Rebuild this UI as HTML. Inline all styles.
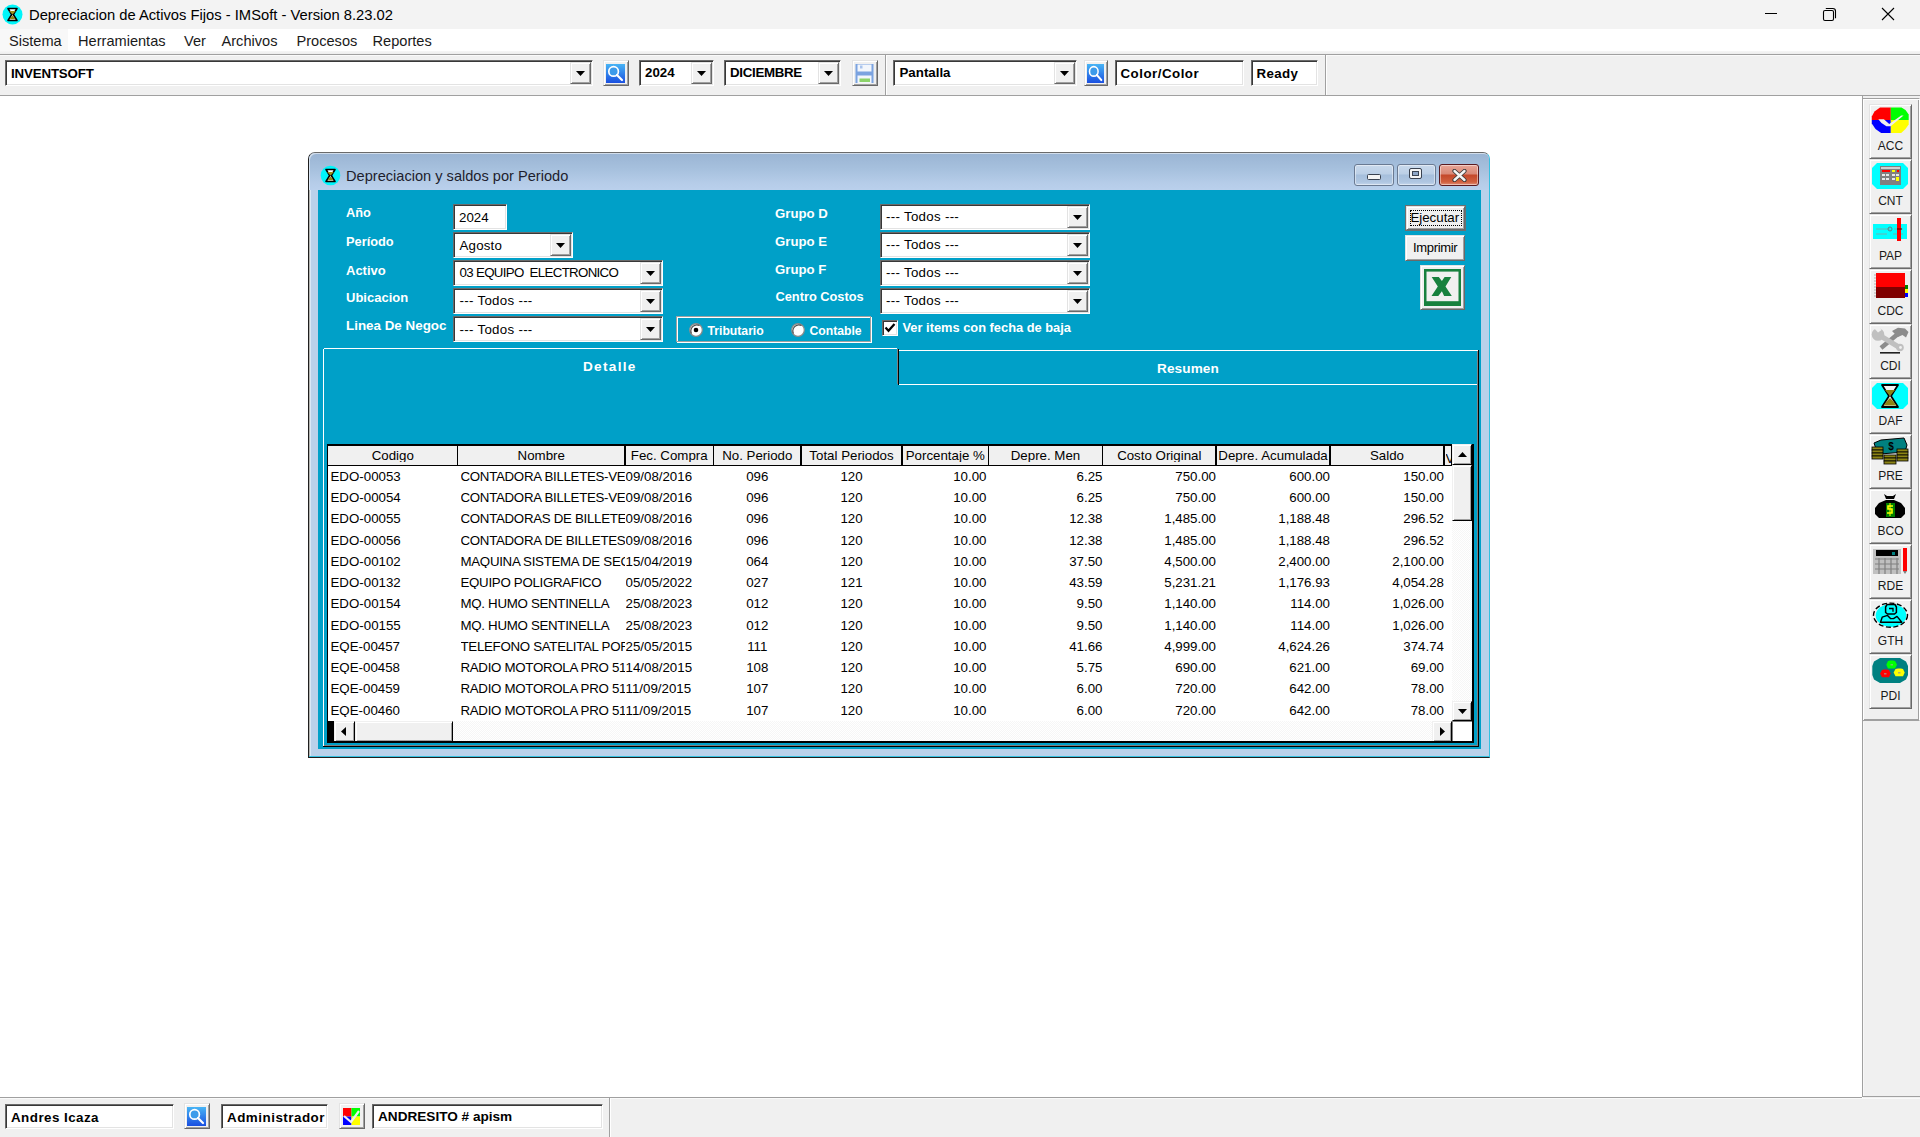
<!DOCTYPE html><html><head><meta charset="utf-8"><style>
html,body{margin:0;padding:0;}
body{width:1920px;height:1137px;overflow:hidden;position:relative;background:#fff;font-family:"Liberation Sans",sans-serif;}
.a{position:absolute;}
.t{white-space:nowrap;}
</style></head><body>
<div class="a " style="left:0px;top:0px;width:1920px;height:29px;background:#F3F3F3;"></div>
<svg class="a" style="left:2px;top:4px" width="21" height="21" viewBox="0 0 21 21"><circle cx="10.5" cy="10.5" r="10" fill="#00F5FA"/><path d="M6 4.5H15L11.3 10.5L15 16.5H6L9.7 10.5Z" fill="#fff" stroke="#000" stroke-width="1.6" stroke-linejoin="round"/><path d="M7.2 7H13.8L10.5 10.5Z" fill="#9C8F1C"/><path d="M7.4 15.3H13.6L10.5 11.6Z" fill="#8F8414"/></svg>
<div class="a t " style="left:29px;top:7.51px;font-size:14.75px;line-height:14.75px;font-weight:normal;color:#000;">Depreciacion de Activos Fijos - IMSoft - Version 8.23.02</div>
<div class="a " style="left:1765px;top:13px;width:12px;height:1px;background:#000;"></div>
<svg class="a" style="left:1822px;top:7px" width="15" height="15" viewBox="0 0 15 15"><rect x="1.5" y="3.5" width="10" height="10" rx="1.5" fill="none" stroke="#000" stroke-width="1.1"/><path d="M3.8 1.5H10.8Q13.5 1.5 13.5 4.2V11.2" fill="none" stroke="#000" stroke-width="1.1"/></svg>
<svg class="a" style="left:1881px;top:7px" width="14" height="14" viewBox="0 0 14 14"><path d="M1 1L13 13M13 1L1 13" stroke="#000" stroke-width="1.1"/></svg>
<div class="a " style="left:0px;top:29px;width:1920px;height:22px;background:#fff;"></div>
<div class="a " style="left:0px;top:29px;width:68px;height:22px;background:#F8F8F8;"></div>
<div class="a " style="left:0px;top:51px;width:1920px;height:3px;background:linear-gradient(#F6F6F6,#EDEDED);"></div>
<div class="a t " style="left:9px;top:34.04px;font-size:14.6px;line-height:14.6px;font-weight:normal;color:#1A1A1A;">Sistema</div>
<div class="a t " style="left:78px;top:34.04px;font-size:14.6px;line-height:14.6px;font-weight:normal;color:#1A1A1A;">Herramientas</div>
<div class="a t " style="left:184px;top:34.04px;font-size:14.6px;line-height:14.6px;font-weight:normal;color:#1A1A1A;">Ver</div>
<div class="a t " style="left:221.5px;top:34.04px;font-size:14.6px;line-height:14.6px;font-weight:normal;color:#1A1A1A;">Archivos</div>
<div class="a t " style="left:296.5px;top:34.04px;font-size:14.6px;line-height:14.6px;font-weight:normal;color:#1A1A1A;">Procesos</div>
<div class="a t " style="left:372.5px;top:34.04px;font-size:14.6px;line-height:14.6px;font-weight:normal;color:#1A1A1A;">Reportes</div>
<div class="a " style="left:0px;top:54px;width:1920px;height:1px;background:#A0A0A0;"></div>
<div class="a " style="left:0px;top:55px;width:1920px;height:40px;background:#F0F0F0;"></div>
<div class="a " style="left:0px;top:55px;width:1920px;height:1px;background:#FAFAFA;"></div>
<div class="a " style="left:0px;top:95px;width:1920px;height:1px;background:#A0A0A0;"></div>
<div class="a " style="left:885px;top:55px;width:1px;height:40px;background:#A0A0A0;"></div>
<div class="a " style="left:886px;top:55px;width:1px;height:40px;background:#fff;"></div>
<div class="a " style="left:1325px;top:55px;width:1px;height:40px;background:#A0A0A0;"></div>
<div class="a " style="left:1326px;top:55px;width:1px;height:40px;background:#fff;"></div>
<div class="a " style="left:5px;top:60px;width:588px;height:26px;background:#fff;box-sizing:border-box;border:1px solid;border-color:#6A6A6A #fff #fff #6A6A6A;box-shadow:inset 1px 1px 0 #383838,inset -1px -1px 0 #E3E3E3;"></div><div class="a " style="left:570px;top:62px;width:21px;height:22px;background:#F0F0F0;box-sizing:border-box;border:1px solid;border-color:#E3E3E3 #696969 #696969 #E3E3E3;box-shadow:inset 1px 1px 0 #fff,inset -1px -1px 0 #A0A0A0;"></div><svg class="a" style="left:576.0px;top:71.0px" width="9" height="5"><path d="M0 0H9L4.5 5Z" fill="#000"/></svg><div class="a t " style="left:11px;top:66.74px;font-size:13.3px;line-height:13.3px;font-weight:bold;color:#000;letter-spacing:-0.15px;">INVENTSOFT</div>
<div class="a " style="left:603px;top:60px;width:26px;height:26px;background:#F0F0F0;box-sizing:border-box;border:1px solid;border-color:#E3E3E3 #696969 #696969 #E3E3E3;box-shadow:inset 1px 1px 0 #fff,inset -1px -1px 0 #A0A0A0;"></div><svg class="a" style="left:606px;top:64px" width="19" height="19" viewBox="0 0 19 19" preserveAspectRatio="none"><defs><linearGradient id="sg" x1="0" y1="0" x2="0" y2="1"><stop offset="0" stop-color="#47B4F5"/><stop offset="1" stop-color="#1A4FE0"/></linearGradient></defs><rect x="0" y="0" width="19" height="19" fill="url(#sg)"/><circle cx="7.6" cy="7.4" r="4.8" fill="#3D9BEA" stroke="#fff" stroke-width="1.7"/><path d="M11 11L16 16" stroke="#fff" stroke-width="2.2" stroke-linecap="round"/></svg>
<div class="a " style="left:639px;top:60px;width:75px;height:26px;background:#fff;box-sizing:border-box;border:1px solid;border-color:#6A6A6A #fff #fff #6A6A6A;box-shadow:inset 1px 1px 0 #383838,inset -1px -1px 0 #E3E3E3;"></div><div class="a " style="left:691px;top:62px;width:21px;height:22px;background:#F0F0F0;box-sizing:border-box;border:1px solid;border-color:#E3E3E3 #696969 #696969 #E3E3E3;box-shadow:inset 1px 1px 0 #fff,inset -1px -1px 0 #A0A0A0;"></div><svg class="a" style="left:697.0px;top:71.0px" width="9" height="5"><path d="M0 0H9L4.5 5Z" fill="#000"/></svg><div class="a t " style="left:645px;top:66.44px;font-size:13.3px;line-height:13.3px;font-weight:bold;color:#000;">2024</div>
<div class="a " style="left:724px;top:60px;width:117px;height:26px;background:#fff;box-sizing:border-box;border:1px solid;border-color:#6A6A6A #fff #fff #6A6A6A;box-shadow:inset 1px 1px 0 #383838,inset -1px -1px 0 #E3E3E3;"></div><div class="a " style="left:818px;top:62px;width:21px;height:22px;background:#F0F0F0;box-sizing:border-box;border:1px solid;border-color:#E3E3E3 #696969 #696969 #E3E3E3;box-shadow:inset 1px 1px 0 #fff,inset -1px -1px 0 #A0A0A0;"></div><svg class="a" style="left:824.0px;top:71.0px" width="9" height="5"><path d="M0 0H9L4.5 5Z" fill="#000"/></svg><div class="a t " style="left:730px;top:66.44px;font-size:13.3px;line-height:13.3px;font-weight:bold;color:#000;letter-spacing:-0.3px;">DICIEMBRE</div>
<div class="a " style="left:852px;top:60px;width:26px;height:26px;background:#F0F0F0;box-sizing:border-box;border:1px solid;border-color:#E3E3E3 #696969 #696969 #E3E3E3;box-shadow:inset 1px 1px 0 #fff,inset -1px -1px 0 #A0A0A0;"></div>
<svg class="a" style="left:855px;top:64px" width="19" height="19" viewBox="0 0 19 19"><rect x="0.5" y="0" width="18" height="19" fill="#7BA3E0"/><rect x="2.5" y="0.5" width="14" height="7" fill="#F2F6FC"/><rect x="5" y="1.5" width="2.5" height="3" fill="#A9C3EC"/><rect x="2.5" y="11.5" width="14" height="7.5" fill="#F2F6FC"/><rect x="4.5" y="14.5" width="10.5" height="3.5" fill="#8CD36A"/></svg>
<div class="a " style="left:893px;top:60px;width:184px;height:26px;background:#fff;box-sizing:border-box;border:1px solid;border-color:#6A6A6A #fff #fff #6A6A6A;box-shadow:inset 1px 1px 0 #383838,inset -1px -1px 0 #E3E3E3;"></div><div class="a " style="left:1054px;top:62px;width:21px;height:22px;background:#F0F0F0;box-sizing:border-box;border:1px solid;border-color:#E3E3E3 #696969 #696969 #E3E3E3;box-shadow:inset 1px 1px 0 #fff,inset -1px -1px 0 #A0A0A0;"></div><svg class="a" style="left:1060.0px;top:71.0px" width="9" height="5"><path d="M0 0H9L4.5 5Z" fill="#000"/></svg><div class="a t " style="left:899.5px;top:66.44px;font-size:13.3px;line-height:13.3px;font-weight:bold;color:#000;">Pantalla</div>
<div class="a " style="left:1084px;top:60px;width:24px;height:26px;background:#F0F0F0;box-sizing:border-box;border:1px solid;border-color:#E3E3E3 #696969 #696969 #E3E3E3;box-shadow:inset 1px 1px 0 #fff,inset -1px -1px 0 #A0A0A0;"></div><svg class="a" style="left:1087px;top:64px" width="17" height="19" viewBox="0 0 19 19" preserveAspectRatio="none"><defs><linearGradient id="sg" x1="0" y1="0" x2="0" y2="1"><stop offset="0" stop-color="#47B4F5"/><stop offset="1" stop-color="#1A4FE0"/></linearGradient></defs><rect x="0" y="0" width="19" height="19" fill="url(#sg)"/><circle cx="7.6" cy="7.4" r="4.8" fill="#3D9BEA" stroke="#fff" stroke-width="1.7"/><path d="M11 11L16 16" stroke="#fff" stroke-width="2.2" stroke-linecap="round"/></svg>
<div class="a " style="left:1115px;top:60px;width:129px;height:26px;background:#fff;box-sizing:border-box;border:1px solid;border-color:#6A6A6A #fff #fff #6A6A6A;box-shadow:inset 1px 1px 0 #383838,inset -1px -1px 0 #E3E3E3;"></div>
<div class="a t " style="left:1120.5px;top:67.04px;font-size:13.3px;line-height:13.3px;font-weight:bold;color:#000;letter-spacing:0.5px;">Color/Color</div>
<div class="a " style="left:1251px;top:60px;width:67px;height:26px;background:#fff;box-sizing:border-box;border:1px solid;border-color:#6A6A6A #fff #fff #6A6A6A;box-shadow:inset 1px 1px 0 #383838,inset -1px -1px 0 #E3E3E3;"></div>
<div class="a t " style="left:1256.5px;top:67.04px;font-size:13.3px;line-height:13.3px;font-weight:bold;color:#000;letter-spacing:0.4px;">Ready</div>
<div class="a " style="left:1862px;top:96px;width:1px;height:1001px;background:#A0A0A0;"></div>
<div class="a " style="left:0px;top:1097px;width:1862px;height:1px;background:#A0A0A0;"></div>
<div class="a " style="left:1863px;top:96px;width:57px;height:1041px;background:#F0F0F0;"></div>
<div class="a " style="left:1862px;top:98px;width:58px;height:623px;box-sizing:border-box;border:1px solid;border-color:#A0A0A0 #fff #A0A0A0 #A0A0A0;box-shadow:inset 1px 1px 0 #fff,inset -1px -1px 0 #A0A0A0;background:#F0F0F0;"></div>
<div class="a " style="left:1862px;top:722px;width:58px;height:375px;box-sizing:border-box;border-left:1px solid #A0A0A0;border-bottom:1px solid #A0A0A0;box-shadow:inset 1px 0 0 #F8F8F8;background:#F0F0F0;"></div>
<div class="a " style="left:1869px;top:104px;width:43px;height:55px;background:#F0F0F0;box-sizing:border-box;border:1px solid;border-color:#E3E3E3 #696969 #696969 #E3E3E3;box-shadow:inset 1px 1px 0 #fff,inset -1px -1px 0 #A0A0A0;"></div>
<div class="a" style="left:1871px;top:107px;width:38px;height:28px"><svg width="38" height="28" viewBox="0 0 38 28"><clipPath id="accb"><path d="M9 0.6H30.5L34.5 3L37.7 7.5V17.6L34.5 22L30.2 25.9H10.1L4.5 22L0.8 16.5V9.5L3.5 4.5Z"/></clipPath><g clip-path="url(#accb)"><rect x="0" y="0" width="19.8" height="13" fill="#FF0000"/><rect x="19.8" y="0" width="19" height="13" fill="#00FF00"/><rect x="0" y="13" width="19.8" height="14" fill="#0000FF"/><rect x="19.8" y="13" width="19" height="14" fill="#FFFF00"/></g><path d="M7.3 12.2H12.9L18.2 16.9L30.2 8.5H32.6L19.6 19.2H15.4L10.5 15.9Z" fill="#EEEEEE"/></svg></div>
<div class="a t" style="left:1690.5px;width:400px;text-align:center;top:139.84px;font-size:12px;line-height:12px;font-weight:normal;color:#1A1A1A;">ACC</div>
<div class="a " style="left:1869px;top:159px;width:43px;height:55px;background:#F0F0F0;box-sizing:border-box;border:1px solid;border-color:#E3E3E3 #696969 #696969 #E3E3E3;box-shadow:inset 1px 1px 0 #fff,inset -1px -1px 0 #A0A0A0;"></div>
<div class="a" style="left:1871px;top:162px;width:38px;height:28px"><svg width="38" height="28" viewBox="0 0 38 28"><path d="M6 1H32L37 6V22L32 27H6L1 22V6Z" fill="#00FFFF"/><rect x="9" y="4" width="21" height="19" fill="#808080"/><rect x="10" y="5" width="19" height="2" fill="#D0D0D0"/><rect x="11" y="8" width="8" height="2" fill="#FF0000"/><rect x="21" y="8" width="3" height="2" fill="#FFFF00"/><rect x="26" y="8" width="2" height="2" fill="#FF0000"/><rect x="11" y="12" width="3" height="2" fill="#E8E8E8"/><rect x="15" y="12" width="3" height="2" fill="#E8E8E8"/><rect x="21" y="12" width="3" height="2" fill="#E8E8E8"/><rect x="25" y="12" width="3" height="2" fill="#E8E8E8"/><rect x="11" y="16" width="3" height="2" fill="#E8E8E8"/><rect x="15" y="16" width="3" height="2" fill="#E8E8E8"/><rect x="21" y="16" width="3" height="2" fill="#E8E8E8"/><rect x="25" y="15" width="3" height="4" fill="#FFFF00"/></svg></div>
<div class="a t" style="left:1690.5px;width:400px;text-align:center;top:194.84px;font-size:12px;line-height:12px;font-weight:normal;color:#1A1A1A;">CNT</div>
<div class="a " style="left:1869px;top:214px;width:43px;height:55px;background:#F0F0F0;box-sizing:border-box;border:1px solid;border-color:#E3E3E3 #696969 #696969 #E3E3E3;box-shadow:inset 1px 1px 0 #fff,inset -1px -1px 0 #A0A0A0;"></div>
<div class="a" style="left:1871px;top:217px;width:38px;height:28px"><svg width="38" height="28" viewBox="0 0 38 28"><rect x="2" y="7" width="34" height="15" fill="#00FFFF"/><path d="M5 12H19M23 12H32M5 17H16M22 17H32" stroke="#70B0B0" stroke-width="1"/><circle cx="19" cy="12" r="2" fill="none" stroke="#608080" stroke-width="1"/><rect x="26" y="1" width="4" height="23" fill="#FF0000"/><path d="M26 12H31" stroke="#400000" stroke-width="1"/></svg></div>
<div class="a t" style="left:1690.5px;width:400px;text-align:center;top:249.84px;font-size:12px;line-height:12px;font-weight:normal;color:#1A1A1A;">PAP</div>
<div class="a " style="left:1869px;top:269px;width:43px;height:55px;background:#F0F0F0;box-sizing:border-box;border:1px solid;border-color:#E3E3E3 #696969 #696969 #E3E3E3;box-shadow:inset 1px 1px 0 #fff,inset -1px -1px 0 #A0A0A0;"></div>
<div class="a" style="left:1871px;top:272px;width:38px;height:28px"><svg width="38" height="28" viewBox="0 0 38 28"><rect x="5" y="1" width="29" height="14" fill="#FF0000"/><rect x="5" y="15" width="29" height="11" fill="#800000"/><rect x="34" y="13" width="3" height="4" fill="#008000"/><rect x="34" y="17" width="3" height="4" fill="#FFFF00"/><rect x="34" y="21" width="3" height="4" fill="#0000FF"/><path d="M3 3H5M3 6H5M3 9H5M3 12H5M3 15H5M3 18H5M3 21H5M3 24H5" stroke="#B0B0B0" stroke-width="1"/></svg></div>
<div class="a t" style="left:1690.5px;width:400px;text-align:center;top:304.84px;font-size:12px;line-height:12px;font-weight:normal;color:#1A1A1A;">CDC</div>
<div class="a " style="left:1869px;top:324px;width:43px;height:55px;background:#F0F0F0;box-sizing:border-box;border:1px solid;border-color:#E3E3E3 #696969 #696969 #E3E3E3;box-shadow:inset 1px 1px 0 #fff,inset -1px -1px 0 #A0A0A0;"></div>
<div class="a" style="left:1871px;top:327px;width:38px;height:28px"><svg width="38" height="28" viewBox="0 0 38 28"><path d="M28 6L10 21" stroke="#8C8C8C" stroke-width="4.5"/><path d="M21 4L27 0.8L34 1.5L37.5 5L35 10.5L31.5 8L27 10Z" fill="#8C8C8C"/><path d="M8 8L28.5 20.5" stroke="#C0C0C0" stroke-width="5"/><circle cx="7" cy="7.5" r="6.3" fill="#C0C0C0"/><path d="M3 1L7 5.5L10.5 3L8 0Z" fill="#F0F0F0"/><circle cx="29" cy="20.5" r="3.8" fill="#C0C0C0"/><circle cx="29.5" cy="20.5" r="1.4" fill="#F0F0F0"/><rect x="9" y="25" width="20" height="1.6" fill="#202020"/></svg></div>
<div class="a t" style="left:1690.5px;width:400px;text-align:center;top:359.84px;font-size:12px;line-height:12px;font-weight:normal;color:#1A1A1A;">CDI</div>
<div class="a " style="left:1869px;top:379px;width:43px;height:55px;background:#F0F0F0;box-sizing:border-box;border:1px solid;border-color:#E3E3E3 #696969 #696969 #E3E3E3;box-shadow:inset 1px 1px 0 #fff,inset -1px -1px 0 #A0A0A0;"></div>
<div class="a" style="left:1871px;top:382px;width:38px;height:28px"><svg width="38" height="28" viewBox="0 0 38 28"><path d="M6 1H32L37 6V22L32 27H6L1 22V6Z" fill="#00FFFF"/><path d="M11 3H27L20 14L27 25H11L18 14Z" fill="#F4F4F4" stroke="#000" stroke-width="1.8" stroke-linejoin="round"/><path d="M14 8H24L19 14Z" fill="#8C8414"/><path d="M12.5 23.5H25.5L22 19L19 16L16 19Z" fill="#8C8414"/></svg></div>
<div class="a t" style="left:1690.5px;width:400px;text-align:center;top:414.84px;font-size:12px;line-height:12px;font-weight:normal;color:#1A1A1A;">DAF</div>
<div class="a " style="left:1869px;top:434px;width:43px;height:55px;background:#F0F0F0;box-sizing:border-box;border:1px solid;border-color:#E3E3E3 #696969 #696969 #E3E3E3;box-shadow:inset 1px 1px 0 #fff,inset -1px -1px 0 #A0A0A0;"></div>
<div class="a" style="left:1871px;top:437px;width:38px;height:28px"><svg width="38" height="28" viewBox="0 0 38 28"><path d="M3 6L10 3L33 1L36 8L34 15L9 17L5 12Z" fill="#008080" stroke="#000" stroke-width="1"/><text x="20" y="13" font-family="Liberation Sans" font-size="10" font-weight="bold" fill="#000" text-anchor="middle">$</text><g fill="#8C8414" stroke="#000" stroke-width="0.8"><rect x="1" y="10" width="11" height="3"/><rect x="1" y="13" width="11" height="3"/><rect x="1" y="16" width="11" height="3"/><rect x="1" y="19" width="11" height="3"/><rect x="26" y="12" width="11" height="3"/><rect x="26" y="15" width="11" height="3"/><rect x="26" y="18" width="11" height="3"/><rect x="26" y="21" width="11" height="3"/><rect x="13" y="18" width="12" height="3"/><rect x="13" y="21" width="12" height="3"/><rect x="13" y="24" width="12" height="3"/></g></svg></div>
<div class="a t" style="left:1690.5px;width:400px;text-align:center;top:469.84px;font-size:12px;line-height:12px;font-weight:normal;color:#1A1A1A;">PRE</div>
<div class="a " style="left:1869px;top:489px;width:43px;height:55px;background:#F0F0F0;box-sizing:border-box;border:1px solid;border-color:#E3E3E3 #696969 #696969 #E3E3E3;box-shadow:inset 1px 1px 0 #fff,inset -1px -1px 0 #A0A0A0;"></div>
<div class="a" style="left:1871px;top:492px;width:38px;height:28px"><svg width="38" height="28" viewBox="0 0 38 28"><path d="M13 2L16 4H22L25 2L23 7H15Z" fill="#000"/><path d="M15 8H23L30 11L34 16L34 22L30 26H8L4 22L4 16L8 11Z" fill="#000"/><rect x="15" y="11" width="9" height="14" fill="#008000"/><path d="M22 14H17V17H21V21H16" fill="none" stroke="#FFFF00" stroke-width="1.6"/><path d="M19 11V24" stroke="#FFFF00" stroke-width="1"/></svg></div>
<div class="a t" style="left:1690.5px;width:400px;text-align:center;top:524.84px;font-size:12px;line-height:12px;font-weight:normal;color:#1A1A1A;">BCO</div>
<div class="a " style="left:1869px;top:544px;width:43px;height:55px;background:#F0F0F0;box-sizing:border-box;border:1px solid;border-color:#E3E3E3 #696969 #696969 #E3E3E3;box-shadow:inset 1px 1px 0 #fff,inset -1px -1px 0 #A0A0A0;"></div>
<div class="a" style="left:1871px;top:547px;width:38px;height:28px"><svg width="38" height="28" viewBox="0 0 38 28"><rect x="2" y="2" width="28" height="25" fill="#C0C0C0"/><rect x="5" y="3" width="22" height="6" fill="#000"/><rect x="21" y="5" width="3" height="3" fill="#008080"/><path d="M8 11V27M14 11V27M20 11V27M26 11V27M4 12H28M4 17H28M4 22H28" stroke="#808080" stroke-width="1.2"/><rect x="32" y="1" width="4" height="23" fill="#FF0000"/><path d="M32 24L34 27L36 24Z" fill="#808080"/></svg></div>
<div class="a t" style="left:1690.5px;width:400px;text-align:center;top:579.84px;font-size:12px;line-height:12px;font-weight:normal;color:#1A1A1A;">RDE</div>
<div class="a " style="left:1869px;top:599px;width:43px;height:55px;background:#F0F0F0;box-sizing:border-box;border:1px solid;border-color:#E3E3E3 #696969 #696969 #E3E3E3;box-shadow:inset 1px 1px 0 #fff,inset -1px -1px 0 #A0A0A0;"></div>
<div class="a" style="left:1871px;top:602px;width:38px;height:28px"><svg width="38" height="28" viewBox="0 0 38 28"><ellipse cx="20" cy="13.4" rx="15.3" ry="11.5" fill="#00FFFF"/><ellipse cx="19.5" cy="13.2" rx="17" ry="12.1" fill="none" stroke="#000" stroke-width="1.4" stroke-dasharray="5 2.5"/><path d="M16 2.6H24L25.4 5V10.5L23.5 12H16.5L14.6 10.5V5Z" fill="none" stroke="#000" stroke-width="1.5"/><path d="M18 6.5H22V9.8" fill="none" stroke="#000" stroke-width="1.3"/><path d="M9.5 20.3L11.2 15.2L16.5 13.4L19.5 16.6H22.5L26 14.4L30.8 20.3Z" fill="none" stroke="#000" stroke-width="1.4" stroke-linejoin="round"/></svg></div>
<div class="a t" style="left:1690.5px;width:400px;text-align:center;top:634.84px;font-size:12px;line-height:12px;font-weight:normal;color:#1A1A1A;">GTH</div>
<div class="a " style="left:1869px;top:654px;width:43px;height:55px;background:#F0F0F0;box-sizing:border-box;border:1px solid;border-color:#E3E3E3 #696969 #696969 #E3E3E3;box-shadow:inset 1px 1px 0 #fff,inset -1px -1px 0 #A0A0A0;"></div>
<div class="a" style="left:1871px;top:657px;width:38px;height:28px"><svg width="38" height="28" viewBox="0 0 38 28"><path d="M9 1H29L35 4.5L37 9V18L35 22.5L29 26H9L3 22.5L1.3 18V9L3 4.5Z" fill="#008080"/><path d="M17 4L19 3.5H22L24 4L26 7.8L24 11.6H17L15.3 7.8Z" fill="#00FF00"/><rect x="19.5" y="7" width="2.5" height="1.5" fill="#70C070"/><path d="M11 13L13 12.6H16L18 13L19.7 16.5L18 20.3H11L9 16.5Z" fill="#FF0000"/><rect x="13" y="16" width="2.5" height="1.5" fill="#C07070"/><path d="M24.5 12L27 11.6H30L32 12L33.7 15.5L32 19.3H24.5L22.6 15.5Z" fill="#FFFF00"/><rect x="27" y="15" width="2.5" height="1.5" fill="#B0B070"/></svg></div>
<div class="a t" style="left:1690.5px;width:400px;text-align:center;top:689.84px;font-size:12px;line-height:12px;font-weight:normal;color:#1A1A1A;">PDI</div>
<div class="a " style="left:0px;top:1098px;width:1920px;height:39px;background:#F0F0F0;"></div>
<div class="a " style="left:0px;top:1098px;width:1920px;height:1px;background:#FAFAFA;"></div>
<div class="a " style="left:609px;top:1098px;width:1px;height:39px;background:#A0A0A0;"></div>
<div class="a " style="left:610px;top:1098px;width:1px;height:39px;background:#fff;"></div>
<div class="a " style="left:5px;top:1104px;width:169px;height:25px;background:#fff;box-sizing:border-box;border:1px solid;border-color:#6A6A6A #fff #fff #6A6A6A;box-shadow:inset 1px 1px 0 #383838,inset -1px -1px 0 #E3E3E3;"></div>
<div class="a t " style="left:11px;top:1110.66px;font-size:13.4px;line-height:13.4px;font-weight:bold;color:#000;letter-spacing:0.45px;">Andres Icaza</div>
<div class="a " style="left:184px;top:1103px;width:26px;height:26px;background:#F0F0F0;box-sizing:border-box;border:1px solid;border-color:#E3E3E3 #696969 #696969 #E3E3E3;box-shadow:inset 1px 1px 0 #fff,inset -1px -1px 0 #A0A0A0;"></div><svg class="a" style="left:187px;top:1107px" width="19" height="19" viewBox="0 0 19 19" preserveAspectRatio="none"><defs><linearGradient id="sg" x1="0" y1="0" x2="0" y2="1"><stop offset="0" stop-color="#47B4F5"/><stop offset="1" stop-color="#1A4FE0"/></linearGradient></defs><rect x="0" y="0" width="19" height="19" fill="url(#sg)"/><circle cx="7.6" cy="7.4" r="4.8" fill="#3D9BEA" stroke="#fff" stroke-width="1.7"/><path d="M11 11L16 16" stroke="#fff" stroke-width="2.2" stroke-linecap="round"/></svg>
<div class="a " style="left:221px;top:1104px;width:107px;height:25px;background:#fff;box-sizing:border-box;border:1px solid;border-color:#6A6A6A #fff #fff #6A6A6A;box-shadow:inset 1px 1px 0 #383838,inset -1px -1px 0 #E3E3E3;"><div class="a t" style="left:5px;top:3px;width:99px;overflow:hidden;font-size:13.4px;line-height:20px;font-weight:bold;letter-spacing:0.5px;">Administrador</div></div>
<div class="a " style="left:339px;top:1103px;width:26px;height:26px;background:#F0F0F0;box-sizing:border-box;border:1px solid;border-color:#E3E3E3 #696969 #696969 #E3E3E3;box-shadow:inset 1px 1px 0 #fff,inset -1px -1px 0 #A0A0A0;"></div>
<svg class="a" style="left:342px;top:1107px" width="19" height="19" viewBox="0 0 19 19"><rect x="1" y="1" width="8.5" height="8.5" fill="#FF0000"/><rect x="9.5" y="1" width="8.5" height="8.5" fill="#00FF00"/><rect x="1" y="9.5" width="8.5" height="8.5" fill="#0000FF"/><rect x="9.5" y="9.5" width="8.5" height="8.5" fill="#FFFF00"/><path d="M2 9L9 15L17 4" fill="none" stroke="#F0F0F0" stroke-width="2.2"/></svg>
<div class="a " style="left:372px;top:1104px;width:231px;height:25px;background:#fff;box-sizing:border-box;border:1px solid;border-color:#6A6A6A #fff #fff #6A6A6A;box-shadow:inset 1px 1px 0 #383838,inset -1px -1px 0 #E3E3E3;"></div>
<div class="a t " style="left:378px;top:1110.49px;font-size:13.6px;line-height:13.6px;font-weight:bold;color:#000;">ANDRESITO # apism</div>
<div class="a " style="left:308px;top:152px;width:1182px;height:606px;background:#B9D1EA;box-sizing:border-box;border:1px solid #1F1F1F;border-top-color:#6A6A6A;border-right-color:#34C0E0;border-radius:7px 7px 0 0;"></div>
<div class="a " style="left:309px;top:153px;width:1180px;height:37px;background:linear-gradient(#9AB4D3,#A7C1DE 45%,#B5CCE8 80%,#BAD0EC);border-radius:6px 6px 0 0;box-shadow:inset 1px 1px 0 rgba(255,255,255,0.55);"></div>
<div class="a " style="left:309px;top:756px;width:1180px;height:1px;background:#34C0E0;"></div>
<div class="a " style="left:309px;top:190px;width:1px;height:566px;background:#B4B4B0;"></div>
<div class="a " style="left:310px;top:190px;width:1px;height:566px;background:#D8E8F6;"></div>
<svg class="a" style="left:320px;top:165px" width="21" height="21" viewBox="0 0 21 21"><circle cx="10.5" cy="10.5" r="9.8" fill="#00F5FA"/><path d="M6 4.5H15L11.3 10.5L15 16.5H6L9.7 10.5Z" fill="#fff" stroke="#000" stroke-width="1.6" stroke-linejoin="round"/><path d="M7.2 7H13.8L10.5 10.5Z" fill="#9C8F1C"/><path d="M7.4 15.3H13.6L10.5 11.6Z" fill="#8F8414"/></svg>
<div class="a t " style="left:346px;top:169.14px;font-size:14.6px;line-height:14.6px;font-weight:normal;color:#1E1E2E;">Depreciacion y saldos por Periodo</div>
<div class="a " style="left:1354px;top:164px;width:40px;height:22px;box-sizing:border-box;border:1px solid #6A7A92;border-radius:3px;background:linear-gradient(#C9D9EC,#BBCFE6 45%,#A6BFDC 50%,#AFC6E1 85%,#C4D6EC);box-shadow:inset 0 0 0 1px rgba(255,255,255,0.45);"><div class="a" style="left:11.5px;top:9px;width:12px;height:4px;background:#F4F4F4;border:1px solid #3A4250;border-radius:1.5px;"></div></div>
<div class="a " style="left:1397px;top:164px;width:39px;height:22px;box-sizing:border-box;border:1px solid #6A7A92;border-radius:3px;background:linear-gradient(#C9D9EC,#BBCFE6 45%,#A6BFDC 50%,#AFC6E1 85%,#C4D6EC);box-shadow:inset 0 0 0 1px rgba(255,255,255,0.45);"><div class="a" style="left:11.5px;top:4px;width:7px;height:5px;border:2px solid #F4F4F4;outline:1px solid #3A4250;border-radius:1px;background:#8EA6C6;box-shadow:inset 0 0 0 1px #3A4250;"></div></div>
<div class="a " style="left:1439px;top:164px;width:40px;height:22px;box-sizing:border-box;border:1px solid #5A1A20;border-radius:3px;background:linear-gradient(#E8A597,#D98876 45%,#C4472A 50%,#D0603F 85%,#E0907A);box-shadow:inset 0 0 0 1px rgba(255,255,255,0.45);"><svg class="a" style="left:11.5px;top:3.5px" width="15" height="13" viewBox="0 0 15 13"><path d="M2.5 2L12.5 11M12.5 2L2.5 11" stroke="#3A3A3A" stroke-width="4.2" stroke-linecap="round"/><path d="M2.5 2L12.5 11M12.5 2L2.5 11" stroke="#F4F4F4" stroke-width="2.4" stroke-linecap="round"/></svg></div>
<div class="a " style="left:318px;top:190px;width:1163px;height:559px;background:#00A0C8;"></div>
<div class="a t " style="left:346px;top:207.46px;font-size:12.8px;line-height:12.8px;font-weight:bold;color:#fff;letter-spacing:0px;">Año</div>
<div class="a t " style="left:346px;top:235.86px;font-size:12.8px;line-height:12.8px;font-weight:bold;color:#fff;letter-spacing:0px;">Período</div>
<div class="a t " style="left:346px;top:263.70px;font-size:13px;line-height:13px;font-weight:bold;color:#fff;letter-spacing:0px;">Activo</div>
<div class="a t " style="left:346px;top:291.40px;font-size:13px;line-height:13px;font-weight:bold;color:#fff;letter-spacing:0px;">Ubicacion</div>
<div class="a t " style="left:346px;top:319.26px;font-size:13.4px;line-height:13.4px;font-weight:bold;color:#fff;letter-spacing:0px;">Linea De Negoc</div>
<div class="a t " style="left:775px;top:207.43px;font-size:13.2px;line-height:13.2px;font-weight:bold;color:#fff;letter-spacing:0px;">Grupo D</div>
<div class="a t " style="left:775px;top:235.43px;font-size:13.2px;line-height:13.2px;font-weight:bold;color:#fff;letter-spacing:0px;">Grupo E</div>
<div class="a t " style="left:775px;top:263.43px;font-size:13.2px;line-height:13.2px;font-weight:bold;color:#fff;letter-spacing:0px;">Grupo F</div>
<div class="a t " style="left:775.5px;top:291.16px;font-size:12.8px;line-height:12.8px;font-weight:bold;color:#fff;letter-spacing:0px;">Centro Costos</div>
<div class="a " style="left:453px;top:204px;width:54px;height:26px;background:#fff;box-sizing:border-box;border:1px solid;border-color:#6A6A6A #fff #fff #6A6A6A;box-shadow:inset 1px 1px 0 #383838,inset -1px -1px 0 #E3E3E3;"></div>
<div class="a t " style="left:459px;top:211.04px;font-size:13.3px;line-height:13.3px;font-weight:normal;color:#000;">2024</div>
<div class="a " style="left:453px;top:232px;width:120px;height:26px;background:#fff;box-sizing:border-box;border:1px solid;border-color:#6A6A6A #fff #fff #6A6A6A;box-shadow:inset 1px 1px 0 #383838,inset -1px -1px 0 #E3E3E3;"></div><div class="a " style="left:550px;top:234px;width:21px;height:22px;background:#F0F0F0;box-sizing:border-box;border:1px solid;border-color:#E3E3E3 #696969 #696969 #E3E3E3;box-shadow:inset 1px 1px 0 #fff,inset -1px -1px 0 #A0A0A0;"></div><svg class="a" style="left:556.0px;top:243.0px" width="9" height="5"><path d="M0 0H9L4.5 5Z" fill="#000"/></svg><div class="a t " style="left:459.5px;top:239.24px;font-size:13.3px;line-height:13.3px;font-weight:normal;color:#000;letter-spacing:0.2px;">Agosto</div>
<div class="a " style="left:453px;top:260px;width:210px;height:26px;background:#fff;box-sizing:border-box;border:1px solid;border-color:#6A6A6A #fff #fff #6A6A6A;box-shadow:inset 1px 1px 0 #383838,inset -1px -1px 0 #E3E3E3;"></div><div class="a " style="left:640px;top:262px;width:21px;height:22px;background:#F0F0F0;box-sizing:border-box;border:1px solid;border-color:#E3E3E3 #696969 #696969 #E3E3E3;box-shadow:inset 1px 1px 0 #fff,inset -1px -1px 0 #A0A0A0;"></div><svg class="a" style="left:646.0px;top:271.0px" width="9" height="5"><path d="M0 0H9L4.5 5Z" fill="#000"/></svg><div class="a t " style="left:459.5px;top:266.24px;font-size:13.3px;line-height:13.3px;font-weight:normal;color:#000;letter-spacing:-0.68px;">03 EQUIPO&nbsp; ELECTRONICO</div>
<div class="a " style="left:453px;top:288px;width:210px;height:26px;background:#fff;box-sizing:border-box;border:1px solid;border-color:#6A6A6A #fff #fff #6A6A6A;box-shadow:inset 1px 1px 0 #383838,inset -1px -1px 0 #E3E3E3;"></div><div class="a " style="left:640px;top:290px;width:21px;height:22px;background:#F0F0F0;box-sizing:border-box;border:1px solid;border-color:#E3E3E3 #696969 #696969 #E3E3E3;box-shadow:inset 1px 1px 0 #fff,inset -1px -1px 0 #A0A0A0;"></div><svg class="a" style="left:646.0px;top:299.0px" width="9" height="5"><path d="M0 0H9L4.5 5Z" fill="#000"/></svg><div class="a t " style="left:459.5px;top:294.24px;font-size:13.3px;line-height:13.3px;font-weight:normal;color:#000;letter-spacing:0.3px;">--- Todos ---</div>
<div class="a " style="left:453px;top:316px;width:210px;height:26px;background:#fff;box-sizing:border-box;border:1px solid;border-color:#6A6A6A #fff #fff #6A6A6A;box-shadow:inset 1px 1px 0 #383838,inset -1px -1px 0 #E3E3E3;"></div><div class="a " style="left:640px;top:318px;width:21px;height:22px;background:#F0F0F0;box-sizing:border-box;border:1px solid;border-color:#E3E3E3 #696969 #696969 #E3E3E3;box-shadow:inset 1px 1px 0 #fff,inset -1px -1px 0 #A0A0A0;"></div><svg class="a" style="left:646.0px;top:327.0px" width="9" height="5"><path d="M0 0H9L4.5 5Z" fill="#000"/></svg><div class="a t " style="left:459.5px;top:322.74px;font-size:13.3px;line-height:13.3px;font-weight:normal;color:#000;letter-spacing:0.3px;">--- Todos ---</div>
<div class="a " style="left:880px;top:204px;width:210px;height:26px;background:#fff;box-sizing:border-box;border:1px solid;border-color:#6A6A6A #fff #fff #6A6A6A;box-shadow:inset 1px 1px 0 #383838,inset -1px -1px 0 #E3E3E3;"></div><div class="a " style="left:1067px;top:206px;width:21px;height:22px;background:#F0F0F0;box-sizing:border-box;border:1px solid;border-color:#E3E3E3 #696969 #696969 #E3E3E3;box-shadow:inset 1px 1px 0 #fff,inset -1px -1px 0 #A0A0A0;"></div><svg class="a" style="left:1073.0px;top:215.0px" width="9" height="5"><path d="M0 0H9L4.5 5Z" fill="#000"/></svg><div class="a t " style="left:886px;top:210.24px;font-size:13.3px;line-height:13.3px;font-weight:normal;color:#000;letter-spacing:0.3px;">--- Todos ---</div>
<div class="a " style="left:880px;top:232px;width:210px;height:26px;background:#fff;box-sizing:border-box;border:1px solid;border-color:#6A6A6A #fff #fff #6A6A6A;box-shadow:inset 1px 1px 0 #383838,inset -1px -1px 0 #E3E3E3;"></div><div class="a " style="left:1067px;top:234px;width:21px;height:22px;background:#F0F0F0;box-sizing:border-box;border:1px solid;border-color:#E3E3E3 #696969 #696969 #E3E3E3;box-shadow:inset 1px 1px 0 #fff,inset -1px -1px 0 #A0A0A0;"></div><svg class="a" style="left:1073.0px;top:243.0px" width="9" height="5"><path d="M0 0H9L4.5 5Z" fill="#000"/></svg><div class="a t " style="left:886px;top:238.24px;font-size:13.3px;line-height:13.3px;font-weight:normal;color:#000;letter-spacing:0.3px;">--- Todos ---</div>
<div class="a " style="left:880px;top:260px;width:210px;height:26px;background:#fff;box-sizing:border-box;border:1px solid;border-color:#6A6A6A #fff #fff #6A6A6A;box-shadow:inset 1px 1px 0 #383838,inset -1px -1px 0 #E3E3E3;"></div><div class="a " style="left:1067px;top:262px;width:21px;height:22px;background:#F0F0F0;box-sizing:border-box;border:1px solid;border-color:#E3E3E3 #696969 #696969 #E3E3E3;box-shadow:inset 1px 1px 0 #fff,inset -1px -1px 0 #A0A0A0;"></div><svg class="a" style="left:1073.0px;top:271.0px" width="9" height="5"><path d="M0 0H9L4.5 5Z" fill="#000"/></svg><div class="a t " style="left:886px;top:266.24px;font-size:13.3px;line-height:13.3px;font-weight:normal;color:#000;letter-spacing:0.3px;">--- Todos ---</div>
<div class="a " style="left:880px;top:288px;width:210px;height:26px;background:#fff;box-sizing:border-box;border:1px solid;border-color:#6A6A6A #fff #fff #6A6A6A;box-shadow:inset 1px 1px 0 #383838,inset -1px -1px 0 #E3E3E3;"></div><div class="a " style="left:1067px;top:290px;width:21px;height:22px;background:#F0F0F0;box-sizing:border-box;border:1px solid;border-color:#E3E3E3 #696969 #696969 #E3E3E3;box-shadow:inset 1px 1px 0 #fff,inset -1px -1px 0 #A0A0A0;"></div><svg class="a" style="left:1073.0px;top:299.0px" width="9" height="5"><path d="M0 0H9L4.5 5Z" fill="#000"/></svg><div class="a t " style="left:886px;top:294.24px;font-size:13.3px;line-height:13.3px;font-weight:normal;color:#000;letter-spacing:0.3px;">--- Todos ---</div>
<div class="a " style="left:676px;top:316px;width:195px;height:26px;box-sizing:border-box;border:1px solid #A0A0A0;box-shadow:inset 1px 1px 0 #fff,1px 1px 0 #fff;"></div>
<svg class="a" style="left:688.5px;top:323px" width="14" height="14" viewBox="0 0 14 14"><circle cx="7" cy="7" r="6.3" fill="#fff" stroke="#8A8A8A" stroke-width="1.2"/><path d="M2.5 10.5A6 6 0 0 1 10.5 2.5" fill="none" stroke="#505050" stroke-width="1.2"/><circle cx="7" cy="7" r="2.3" fill="#000"/></svg>
<div class="a t " style="left:707.5px;top:325.37px;font-size:12.2px;line-height:12.2px;font-weight:bold;color:#fff;">Tributario</div>
<svg class="a" style="left:791px;top:323px" width="14" height="14" viewBox="0 0 14 14"><circle cx="7" cy="7" r="6.3" fill="#fff" stroke="#8A8A8A" stroke-width="1.2"/><path d="M2.5 10.5A6 6 0 0 1 10.5 2.5" fill="none" stroke="#505050" stroke-width="1.2"/></svg>
<div class="a t " style="left:809.5px;top:325.37px;font-size:12.2px;line-height:12.2px;font-weight:bold;color:#fff;">Contable</div>
<div class="a " style="left:882px;top:320px;width:16px;height:16px;background:#fff;box-sizing:border-box;border:1px solid;border-color:#6A6A6A #fff #fff #6A6A6A;box-shadow:inset 1px 1px 0 #383838,inset -1px -1px 0 #E3E3E3;"></div>
<svg class="a" style="left:884px;top:322px" width="12" height="12" viewBox="0 0 12 12"><path d="M1.5 5.5L4.5 8.8L10.5 2" fill="none" stroke="#000" stroke-width="2.2"/></svg>
<div class="a t " style="left:902.5px;top:321.62px;font-size:12.85px;line-height:12.85px;font-weight:bold;color:#fff;">Ver items con fecha de baja</div>
<div class="a " style="left:1405px;top:205px;width:61px;height:26px;box-sizing:border-box;border:1px solid #6E6E6E;"></div>
<div class="a " style="left:1406px;top:206px;width:59px;height:24px;background:#F0F0F0;box-sizing:border-box;border:1px solid;border-color:#E3E3E3 #696969 #696969 #E3E3E3;box-shadow:inset 1px 1px 0 #fff,inset -1px -1px 0 #A0A0A0;"></div>
<div class="a " style="left:1410px;top:210px;width:52px;height:16px;box-sizing:border-box;border:1px dotted #000;"></div>
<div class="a t" style="left:1234.8px;width:400px;text-align:center;top:210.74px;font-size:13.3px;line-height:13.3px;font-weight:normal;color:#000;">Ejecutar</div>
<div class="a " style="left:1405px;top:235px;width:60px;height:26px;background:#F0F0F0;box-sizing:border-box;border:1px solid;border-color:#E3E3E3 #696969 #696969 #E3E3E3;box-shadow:inset 1px 1px 0 #fff,inset -1px -1px 0 #A0A0A0;"></div>
<div class="a t" style="left:1235.2px;width:400px;text-align:center;top:241.30px;font-size:13.0px;line-height:13.0px;font-weight:normal;color:#000;letter-spacing:-0.35px;">Imprimir</div>
<div class="a " style="left:1420px;top:265px;width:45px;height:45px;background:#F0F0F0;box-sizing:border-box;border:1px solid;border-color:#E3E3E3 #696969 #696969 #E3E3E3;box-shadow:inset 1px 1px 0 #fff,inset -1px -1px 0 #A0A0A0;"></div>
<svg class="a" style="left:1424px;top:268.7px" width="37" height="37" viewBox="0 0 37 37"><rect x="0" y="0" width="37" height="37" fill="#17813E"/><rect x="2.5" y="2.6" width="32" height="29.6" fill="#F0F0F0"/><path d="M7.7 8H14.8L17.9 12.1L20.6 8H27.3L21.5 17.4L27.8 26.9H20.1L17.9 22.3L14.3 27.1H7.5L13.8 17.4Z" fill="#17813E"/></svg>
<div class="a " style="left:323px;top:384px;width:1px;height:363px;background:#fff;"></div>
<div class="a " style="left:899px;top:384px;width:579px;height:1px;background:#fff;"></div>
<div class="a " style="left:1477px;top:351px;width:1px;height:395px;background:#808080;"></div>
<div class="a " style="left:1478px;top:350px;width:1px;height:397px;background:#000;"></div>
<div class="a " style="left:324px;top:745px;width:1154px;height:1px;background:#808080;"></div>
<div class="a " style="left:323px;top:746px;width:1156px;height:1px;background:#000;"></div>
<div class="a " style="left:899px;top:350px;width:579px;height:1px;background:#fff;"></div>
<div class="a " style="left:324px;top:348px;width:573px;height:1px;background:#fff;"></div>
<div class="a " style="left:323px;top:349px;width:1px;height:35px;background:#fff;"></div>
<div class="a " style="left:897px;top:349px;width:1px;height:35px;background:#808080;"></div>
<div class="a " style="left:898px;top:349px;width:1px;height:36px;background:#000;"></div>
<div class="a t " style="left:583px;top:359.79px;font-size:13.6px;line-height:13.6px;font-weight:bold;color:#fff;letter-spacing:1.3px;">Detalle</div>
<div class="a t " style="left:1157px;top:362.29px;font-size:13.6px;line-height:13.6px;font-weight:bold;color:#fff;letter-spacing:0.1px;">Resumen</div>
<div class="a " style="left:327px;top:444px;width:1147px;height:299px;background:#fff;box-sizing:border-box;border:1px solid #000;border-right-width:2px;border-top-width:2px;"></div>
<div class="a " style="left:328px;top:446px;width:1124px;height:19px;background:#F0F0F0;"></div>
<div class="a " style="left:328px;top:465px;width:1124px;height:1px;background:#000;"></div>
<div class="a t" style="left:328px;width:129.5px;top:448.54px;font-size:13.3px;line-height:13.3px;text-align:center;overflow:hidden;color:#000;">Codigo</div>
<div class="a " style="left:456.5px;top:446px;width:1.5px;height:19px;background:#000;"></div>
<div class="a t" style="left:457.5px;width:167.5px;top:448.54px;font-size:13.3px;line-height:13.3px;text-align:center;overflow:hidden;color:#000;">Nombre</div>
<div class="a " style="left:624px;top:446px;width:1.5px;height:19px;background:#000;"></div>
<div class="a t" style="left:625px;width:88.5px;top:448.54px;font-size:13.3px;line-height:13.3px;text-align:center;overflow:hidden;color:#000;">Fec. Compra</div>
<div class="a " style="left:712.5px;top:446px;width:1.5px;height:19px;background:#000;"></div>
<div class="a t" style="left:713.5px;width:87.5px;top:448.54px;font-size:13.3px;line-height:13.3px;text-align:center;overflow:hidden;color:#000;">No. Periodo</div>
<div class="a " style="left:800px;top:446px;width:1.5px;height:19px;background:#000;"></div>
<div class="a t" style="left:801px;width:101px;top:448.54px;font-size:13.3px;line-height:13.3px;text-align:center;overflow:hidden;color:#000;">Total Periodos</div>
<div class="a " style="left:901px;top:446px;width:1.5px;height:19px;background:#000;"></div>
<div class="a t" style="left:902px;width:86.5px;top:448.54px;font-size:13.3px;line-height:13.3px;text-align:center;overflow:hidden;color:#000;">Porcentaje %</div>
<div class="a " style="left:987.5px;top:446px;width:1.5px;height:19px;background:#000;"></div>
<div class="a t" style="left:988.5px;width:114.0px;top:448.54px;font-size:13.3px;line-height:13.3px;text-align:center;overflow:hidden;color:#000;">Depre. Men</div>
<div class="a " style="left:1101.5px;top:446px;width:1.5px;height:19px;background:#000;"></div>
<div class="a t" style="left:1102.5px;width:113.5px;top:448.54px;font-size:13.3px;line-height:13.3px;text-align:center;overflow:hidden;color:#000;">Costo Original</div>
<div class="a " style="left:1215px;top:446px;width:1.5px;height:19px;background:#000;"></div>
<div class="a t" style="left:1216px;width:114px;top:448.54px;font-size:13.3px;line-height:13.3px;text-align:center;overflow:hidden;color:#000;">Depre. Acumulada</div>
<div class="a " style="left:1329px;top:446px;width:1.5px;height:19px;background:#000;"></div>
<div class="a t" style="left:1330px;width:114px;top:448.54px;font-size:13.3px;line-height:13.3px;text-align:center;overflow:hidden;color:#000;">Saldo</div>
<div class="a " style="left:1443px;top:446px;width:1.5px;height:19px;background:#000;"></div>
<div class="a t" style="left:1445.5px;top:452px;width:6.5px;overflow:hidden;font-size:13.3px;line-height:14px;">V</div>
<div class="a" style="left:328px;top:466px;width:1124px;height:255px;overflow:hidden;">
<div class="a t" style="left:2.5px;width:127.0px;top:3.74px;font-size:13.3px;line-height:13.3px;overflow:hidden;">EDO-00053</div>
<div class="a t" style="left:132.5px;width:164.5px;top:3.74px;font-size:13.3px;line-height:13.3px;overflow:hidden;letter-spacing:-0.3px;">CONTADORA BILLETES-VENTA</div>
<div class="a t" style="left:297.5px;width:88.0px;top:3.74px;font-size:13.3px;line-height:13.3px;overflow:hidden;">09/08/2016</div>
<div class="a t" style="left:385.5px;width:87.5px;top:3.74px;font-size:13.3px;line-height:13.3px;text-align:center;overflow:hidden;">096</div>
<div class="a t" style="left:473px;width:101px;top:3.74px;font-size:13.3px;line-height:13.3px;text-align:center;overflow:hidden;">120</div>
<div class="a t" style="left:574px;width:84.5px;top:3.74px;font-size:13.3px;line-height:13.3px;text-align:right;overflow:hidden;">10.00</div>
<div class="a t" style="left:660.5px;width:114.0px;top:3.74px;font-size:13.3px;line-height:13.3px;text-align:right;overflow:hidden;">6.25</div>
<div class="a t" style="left:774.5px;width:113.5px;top:3.74px;font-size:13.3px;line-height:13.3px;text-align:right;overflow:hidden;">750.00</div>
<div class="a t" style="left:888px;width:114px;top:3.74px;font-size:13.3px;line-height:13.3px;text-align:right;overflow:hidden;">600.00</div>
<div class="a t" style="left:1002px;width:114px;top:3.74px;font-size:13.3px;line-height:13.3px;text-align:right;overflow:hidden;">150.00</div>
<div class="a t" style="left:2.5px;width:127.0px;top:24.74px;font-size:13.3px;line-height:13.3px;overflow:hidden;">EDO-00054</div>
<div class="a t" style="left:132.5px;width:164.5px;top:24.74px;font-size:13.3px;line-height:13.3px;overflow:hidden;letter-spacing:-0.3px;">CONTADORA BILLETES-VENTA</div>
<div class="a t" style="left:297.5px;width:88.0px;top:24.74px;font-size:13.3px;line-height:13.3px;overflow:hidden;">09/08/2016</div>
<div class="a t" style="left:385.5px;width:87.5px;top:24.74px;font-size:13.3px;line-height:13.3px;text-align:center;overflow:hidden;">096</div>
<div class="a t" style="left:473px;width:101px;top:24.74px;font-size:13.3px;line-height:13.3px;text-align:center;overflow:hidden;">120</div>
<div class="a t" style="left:574px;width:84.5px;top:24.74px;font-size:13.3px;line-height:13.3px;text-align:right;overflow:hidden;">10.00</div>
<div class="a t" style="left:660.5px;width:114.0px;top:24.74px;font-size:13.3px;line-height:13.3px;text-align:right;overflow:hidden;">6.25</div>
<div class="a t" style="left:774.5px;width:113.5px;top:24.74px;font-size:13.3px;line-height:13.3px;text-align:right;overflow:hidden;">750.00</div>
<div class="a t" style="left:888px;width:114px;top:24.74px;font-size:13.3px;line-height:13.3px;text-align:right;overflow:hidden;">600.00</div>
<div class="a t" style="left:1002px;width:114px;top:24.74px;font-size:13.3px;line-height:13.3px;text-align:right;overflow:hidden;">150.00</div>
<div class="a t" style="left:2.5px;width:127.0px;top:45.74px;font-size:13.3px;line-height:13.3px;overflow:hidden;">EDO-00055</div>
<div class="a t" style="left:132.5px;width:164.5px;top:45.74px;font-size:13.3px;line-height:13.3px;overflow:hidden;letter-spacing:-0.3px;">CONTADORAS DE BILLETES</div>
<div class="a t" style="left:297.5px;width:88.0px;top:45.74px;font-size:13.3px;line-height:13.3px;overflow:hidden;">09/08/2016</div>
<div class="a t" style="left:385.5px;width:87.5px;top:45.74px;font-size:13.3px;line-height:13.3px;text-align:center;overflow:hidden;">096</div>
<div class="a t" style="left:473px;width:101px;top:45.74px;font-size:13.3px;line-height:13.3px;text-align:center;overflow:hidden;">120</div>
<div class="a t" style="left:574px;width:84.5px;top:45.74px;font-size:13.3px;line-height:13.3px;text-align:right;overflow:hidden;">10.00</div>
<div class="a t" style="left:660.5px;width:114.0px;top:45.74px;font-size:13.3px;line-height:13.3px;text-align:right;overflow:hidden;">12.38</div>
<div class="a t" style="left:774.5px;width:113.5px;top:45.74px;font-size:13.3px;line-height:13.3px;text-align:right;overflow:hidden;">1,485.00</div>
<div class="a t" style="left:888px;width:114px;top:45.74px;font-size:13.3px;line-height:13.3px;text-align:right;overflow:hidden;">1,188.48</div>
<div class="a t" style="left:1002px;width:114px;top:45.74px;font-size:13.3px;line-height:13.3px;text-align:right;overflow:hidden;">296.52</div>
<div class="a t" style="left:2.5px;width:127.0px;top:67.74px;font-size:13.3px;line-height:13.3px;overflow:hidden;">EDO-00056</div>
<div class="a t" style="left:132.5px;width:164.5px;top:67.74px;font-size:13.3px;line-height:13.3px;overflow:hidden;letter-spacing:-0.3px;">CONTADORA DE BILLETES</div>
<div class="a t" style="left:297.5px;width:88.0px;top:67.74px;font-size:13.3px;line-height:13.3px;overflow:hidden;">09/08/2016</div>
<div class="a t" style="left:385.5px;width:87.5px;top:67.74px;font-size:13.3px;line-height:13.3px;text-align:center;overflow:hidden;">096</div>
<div class="a t" style="left:473px;width:101px;top:67.74px;font-size:13.3px;line-height:13.3px;text-align:center;overflow:hidden;">120</div>
<div class="a t" style="left:574px;width:84.5px;top:67.74px;font-size:13.3px;line-height:13.3px;text-align:right;overflow:hidden;">10.00</div>
<div class="a t" style="left:660.5px;width:114.0px;top:67.74px;font-size:13.3px;line-height:13.3px;text-align:right;overflow:hidden;">12.38</div>
<div class="a t" style="left:774.5px;width:113.5px;top:67.74px;font-size:13.3px;line-height:13.3px;text-align:right;overflow:hidden;">1,485.00</div>
<div class="a t" style="left:888px;width:114px;top:67.74px;font-size:13.3px;line-height:13.3px;text-align:right;overflow:hidden;">1,188.48</div>
<div class="a t" style="left:1002px;width:114px;top:67.74px;font-size:13.3px;line-height:13.3px;text-align:right;overflow:hidden;">296.52</div>
<div class="a t" style="left:2.5px;width:127.0px;top:88.74px;font-size:13.3px;line-height:13.3px;overflow:hidden;">EDO-00102</div>
<div class="a t" style="left:132.5px;width:164.5px;top:88.74px;font-size:13.3px;line-height:13.3px;overflow:hidden;letter-spacing:-0.3px;">MAQUINA SISTEMA DE SEGURIDAD</div>
<div class="a t" style="left:297.5px;width:88.0px;top:88.74px;font-size:13.3px;line-height:13.3px;overflow:hidden;">15/04/2019</div>
<div class="a t" style="left:385.5px;width:87.5px;top:88.74px;font-size:13.3px;line-height:13.3px;text-align:center;overflow:hidden;">064</div>
<div class="a t" style="left:473px;width:101px;top:88.74px;font-size:13.3px;line-height:13.3px;text-align:center;overflow:hidden;">120</div>
<div class="a t" style="left:574px;width:84.5px;top:88.74px;font-size:13.3px;line-height:13.3px;text-align:right;overflow:hidden;">10.00</div>
<div class="a t" style="left:660.5px;width:114.0px;top:88.74px;font-size:13.3px;line-height:13.3px;text-align:right;overflow:hidden;">37.50</div>
<div class="a t" style="left:774.5px;width:113.5px;top:88.74px;font-size:13.3px;line-height:13.3px;text-align:right;overflow:hidden;">4,500.00</div>
<div class="a t" style="left:888px;width:114px;top:88.74px;font-size:13.3px;line-height:13.3px;text-align:right;overflow:hidden;">2,400.00</div>
<div class="a t" style="left:1002px;width:114px;top:88.74px;font-size:13.3px;line-height:13.3px;text-align:right;overflow:hidden;">2,100.00</div>
<div class="a t" style="left:2.5px;width:127.0px;top:109.74px;font-size:13.3px;line-height:13.3px;overflow:hidden;">EDO-00132</div>
<div class="a t" style="left:132.5px;width:164.5px;top:109.74px;font-size:13.3px;line-height:13.3px;overflow:hidden;letter-spacing:-0.3px;">EQUIPO POLIGRAFICO</div>
<div class="a t" style="left:297.5px;width:88.0px;top:109.74px;font-size:13.3px;line-height:13.3px;overflow:hidden;">05/05/2022</div>
<div class="a t" style="left:385.5px;width:87.5px;top:109.74px;font-size:13.3px;line-height:13.3px;text-align:center;overflow:hidden;">027</div>
<div class="a t" style="left:473px;width:101px;top:109.74px;font-size:13.3px;line-height:13.3px;text-align:center;overflow:hidden;">121</div>
<div class="a t" style="left:574px;width:84.5px;top:109.74px;font-size:13.3px;line-height:13.3px;text-align:right;overflow:hidden;">10.00</div>
<div class="a t" style="left:660.5px;width:114.0px;top:109.74px;font-size:13.3px;line-height:13.3px;text-align:right;overflow:hidden;">43.59</div>
<div class="a t" style="left:774.5px;width:113.5px;top:109.74px;font-size:13.3px;line-height:13.3px;text-align:right;overflow:hidden;">5,231.21</div>
<div class="a t" style="left:888px;width:114px;top:109.74px;font-size:13.3px;line-height:13.3px;text-align:right;overflow:hidden;">1,176.93</div>
<div class="a t" style="left:1002px;width:114px;top:109.74px;font-size:13.3px;line-height:13.3px;text-align:right;overflow:hidden;">4,054.28</div>
<div class="a t" style="left:2.5px;width:127.0px;top:130.74px;font-size:13.3px;line-height:13.3px;overflow:hidden;">EDO-00154</div>
<div class="a t" style="left:132.5px;width:164.5px;top:130.74px;font-size:13.3px;line-height:13.3px;overflow:hidden;letter-spacing:-0.3px;">MQ. HUMO SENTINELLA</div>
<div class="a t" style="left:297.5px;width:88.0px;top:130.74px;font-size:13.3px;line-height:13.3px;overflow:hidden;">25/08/2023</div>
<div class="a t" style="left:385.5px;width:87.5px;top:130.74px;font-size:13.3px;line-height:13.3px;text-align:center;overflow:hidden;">012</div>
<div class="a t" style="left:473px;width:101px;top:130.74px;font-size:13.3px;line-height:13.3px;text-align:center;overflow:hidden;">120</div>
<div class="a t" style="left:574px;width:84.5px;top:130.74px;font-size:13.3px;line-height:13.3px;text-align:right;overflow:hidden;">10.00</div>
<div class="a t" style="left:660.5px;width:114.0px;top:130.74px;font-size:13.3px;line-height:13.3px;text-align:right;overflow:hidden;">9.50</div>
<div class="a t" style="left:774.5px;width:113.5px;top:130.74px;font-size:13.3px;line-height:13.3px;text-align:right;overflow:hidden;">1,140.00</div>
<div class="a t" style="left:888px;width:114px;top:130.74px;font-size:13.3px;line-height:13.3px;text-align:right;overflow:hidden;">114.00</div>
<div class="a t" style="left:1002px;width:114px;top:130.74px;font-size:13.3px;line-height:13.3px;text-align:right;overflow:hidden;">1,026.00</div>
<div class="a t" style="left:2.5px;width:127.0px;top:152.74px;font-size:13.3px;line-height:13.3px;overflow:hidden;">EDO-00155</div>
<div class="a t" style="left:132.5px;width:164.5px;top:152.74px;font-size:13.3px;line-height:13.3px;overflow:hidden;letter-spacing:-0.3px;">MQ. HUMO SENTINELLA</div>
<div class="a t" style="left:297.5px;width:88.0px;top:152.74px;font-size:13.3px;line-height:13.3px;overflow:hidden;">25/08/2023</div>
<div class="a t" style="left:385.5px;width:87.5px;top:152.74px;font-size:13.3px;line-height:13.3px;text-align:center;overflow:hidden;">012</div>
<div class="a t" style="left:473px;width:101px;top:152.74px;font-size:13.3px;line-height:13.3px;text-align:center;overflow:hidden;">120</div>
<div class="a t" style="left:574px;width:84.5px;top:152.74px;font-size:13.3px;line-height:13.3px;text-align:right;overflow:hidden;">10.00</div>
<div class="a t" style="left:660.5px;width:114.0px;top:152.74px;font-size:13.3px;line-height:13.3px;text-align:right;overflow:hidden;">9.50</div>
<div class="a t" style="left:774.5px;width:113.5px;top:152.74px;font-size:13.3px;line-height:13.3px;text-align:right;overflow:hidden;">1,140.00</div>
<div class="a t" style="left:888px;width:114px;top:152.74px;font-size:13.3px;line-height:13.3px;text-align:right;overflow:hidden;">114.00</div>
<div class="a t" style="left:1002px;width:114px;top:152.74px;font-size:13.3px;line-height:13.3px;text-align:right;overflow:hidden;">1,026.00</div>
<div class="a t" style="left:2.5px;width:127.0px;top:173.74px;font-size:13.3px;line-height:13.3px;overflow:hidden;">EQE-00457</div>
<div class="a t" style="left:132.5px;width:164.5px;top:173.74px;font-size:13.3px;line-height:13.3px;overflow:hidden;letter-spacing:-0.3px;">TELEFONO SATELITAL PORTATIL</div>
<div class="a t" style="left:297.5px;width:88.0px;top:173.74px;font-size:13.3px;line-height:13.3px;overflow:hidden;">25/05/2015</div>
<div class="a t" style="left:385.5px;width:87.5px;top:173.74px;font-size:13.3px;line-height:13.3px;text-align:center;overflow:hidden;">111</div>
<div class="a t" style="left:473px;width:101px;top:173.74px;font-size:13.3px;line-height:13.3px;text-align:center;overflow:hidden;">120</div>
<div class="a t" style="left:574px;width:84.5px;top:173.74px;font-size:13.3px;line-height:13.3px;text-align:right;overflow:hidden;">10.00</div>
<div class="a t" style="left:660.5px;width:114.0px;top:173.74px;font-size:13.3px;line-height:13.3px;text-align:right;overflow:hidden;">41.66</div>
<div class="a t" style="left:774.5px;width:113.5px;top:173.74px;font-size:13.3px;line-height:13.3px;text-align:right;overflow:hidden;">4,999.00</div>
<div class="a t" style="left:888px;width:114px;top:173.74px;font-size:13.3px;line-height:13.3px;text-align:right;overflow:hidden;">4,624.26</div>
<div class="a t" style="left:1002px;width:114px;top:173.74px;font-size:13.3px;line-height:13.3px;text-align:right;overflow:hidden;">374.74</div>
<div class="a t" style="left:2.5px;width:127.0px;top:194.74px;font-size:13.3px;line-height:13.3px;overflow:hidden;">EQE-00458</div>
<div class="a t" style="left:132.5px;width:164.5px;top:194.74px;font-size:13.3px;line-height:13.3px;overflow:hidden;letter-spacing:-0.3px;">RADIO MOTOROLA PRO 5150</div>
<div class="a t" style="left:297.5px;width:88.0px;top:194.74px;font-size:13.3px;line-height:13.3px;overflow:hidden;">14/08/2015</div>
<div class="a t" style="left:385.5px;width:87.5px;top:194.74px;font-size:13.3px;line-height:13.3px;text-align:center;overflow:hidden;">108</div>
<div class="a t" style="left:473px;width:101px;top:194.74px;font-size:13.3px;line-height:13.3px;text-align:center;overflow:hidden;">120</div>
<div class="a t" style="left:574px;width:84.5px;top:194.74px;font-size:13.3px;line-height:13.3px;text-align:right;overflow:hidden;">10.00</div>
<div class="a t" style="left:660.5px;width:114.0px;top:194.74px;font-size:13.3px;line-height:13.3px;text-align:right;overflow:hidden;">5.75</div>
<div class="a t" style="left:774.5px;width:113.5px;top:194.74px;font-size:13.3px;line-height:13.3px;text-align:right;overflow:hidden;">690.00</div>
<div class="a t" style="left:888px;width:114px;top:194.74px;font-size:13.3px;line-height:13.3px;text-align:right;overflow:hidden;">621.00</div>
<div class="a t" style="left:1002px;width:114px;top:194.74px;font-size:13.3px;line-height:13.3px;text-align:right;overflow:hidden;">69.00</div>
<div class="a t" style="left:2.5px;width:127.0px;top:215.74px;font-size:13.3px;line-height:13.3px;overflow:hidden;">EQE-00459</div>
<div class="a t" style="left:132.5px;width:164.5px;top:215.74px;font-size:13.3px;line-height:13.3px;overflow:hidden;letter-spacing:-0.3px;">RADIO MOTOROLA PRO 5150</div>
<div class="a t" style="left:297.5px;width:88.0px;top:215.74px;font-size:13.3px;line-height:13.3px;overflow:hidden;">11/09/2015</div>
<div class="a t" style="left:385.5px;width:87.5px;top:215.74px;font-size:13.3px;line-height:13.3px;text-align:center;overflow:hidden;">107</div>
<div class="a t" style="left:473px;width:101px;top:215.74px;font-size:13.3px;line-height:13.3px;text-align:center;overflow:hidden;">120</div>
<div class="a t" style="left:574px;width:84.5px;top:215.74px;font-size:13.3px;line-height:13.3px;text-align:right;overflow:hidden;">10.00</div>
<div class="a t" style="left:660.5px;width:114.0px;top:215.74px;font-size:13.3px;line-height:13.3px;text-align:right;overflow:hidden;">6.00</div>
<div class="a t" style="left:774.5px;width:113.5px;top:215.74px;font-size:13.3px;line-height:13.3px;text-align:right;overflow:hidden;">720.00</div>
<div class="a t" style="left:888px;width:114px;top:215.74px;font-size:13.3px;line-height:13.3px;text-align:right;overflow:hidden;">642.00</div>
<div class="a t" style="left:1002px;width:114px;top:215.74px;font-size:13.3px;line-height:13.3px;text-align:right;overflow:hidden;">78.00</div>
<div class="a t" style="left:2.5px;width:127.0px;top:237.74px;font-size:13.3px;line-height:13.3px;overflow:hidden;">EQE-00460</div>
<div class="a t" style="left:132.5px;width:164.5px;top:237.74px;font-size:13.3px;line-height:13.3px;overflow:hidden;letter-spacing:-0.3px;">RADIO MOTOROLA PRO 5150</div>
<div class="a t" style="left:297.5px;width:88.0px;top:237.74px;font-size:13.3px;line-height:13.3px;overflow:hidden;">11/09/2015</div>
<div class="a t" style="left:385.5px;width:87.5px;top:237.74px;font-size:13.3px;line-height:13.3px;text-align:center;overflow:hidden;">107</div>
<div class="a t" style="left:473px;width:101px;top:237.74px;font-size:13.3px;line-height:13.3px;text-align:center;overflow:hidden;">120</div>
<div class="a t" style="left:574px;width:84.5px;top:237.74px;font-size:13.3px;line-height:13.3px;text-align:right;overflow:hidden;">10.00</div>
<div class="a t" style="left:660.5px;width:114.0px;top:237.74px;font-size:13.3px;line-height:13.3px;text-align:right;overflow:hidden;">6.00</div>
<div class="a t" style="left:774.5px;width:113.5px;top:237.74px;font-size:13.3px;line-height:13.3px;text-align:right;overflow:hidden;">720.00</div>
<div class="a t" style="left:888px;width:114px;top:237.74px;font-size:13.3px;line-height:13.3px;text-align:right;overflow:hidden;">642.00</div>
<div class="a t" style="left:1002px;width:114px;top:237.74px;font-size:13.3px;line-height:13.3px;text-align:right;overflow:hidden;">78.00</div>
</div>
<div class="a " style="left:1452px;top:445px;width:20px;height:276px;background:repeating-conic-gradient(#F6F6F6 0 25%,#FFFFFF 0 50%) 0 0/2px 2px;"></div>
<div class="a " style="left:1452px;top:444px;width:20px;height:21px;background:#F0F0F0;box-sizing:border-box;border:1px solid;border-color:#F0F0F0 #000 #000 #F0F0F0;box-shadow:inset 1px 1px 0 #fff,inset -1px -1px 0 #A0A0A0;"></div>
<svg class="a" style="left:1457.5px;top:451.5px" width="9" height="5"><path d="M0 5H9L4.5 0Z" fill="#000"/></svg>
<div class="a " style="left:1452px;top:465px;width:20px;height:56px;background:#F0F0F0;box-sizing:border-box;border:1px solid;border-color:#F0F0F0 #000 #000 #F0F0F0;box-shadow:inset 1px 1px 0 #fff,inset -1px -1px 0 #A0A0A0;"></div>
<div class="a " style="left:1451px;top:446px;width:1px;height:19px;background:#000;"></div>
<div class="a " style="left:1452px;top:701px;width:20px;height:20px;background:#F0F0F0;box-sizing:border-box;border:1px solid;border-color:#F0F0F0 #000 #000 #F0F0F0;box-shadow:inset 1px 1px 0 #fff,inset -1px -1px 0 #A0A0A0;"></div>
<svg class="a" style="left:1457.5px;top:709px" width="9" height="5"><path d="M0 0H9L4.5 5Z" fill="#000"/></svg>
<div class="a " style="left:327px;top:721px;width:1125px;height:21px;background:repeating-conic-gradient(#F6F6F6 0 25%,#FFFFFF 0 50%) 0 0/2px 2px;"></div>
<div class="a " style="left:327px;top:721px;width:7px;height:21px;background:#000;"></div>
<div class="a " style="left:334px;top:721px;width:21px;height:21px;background:#F0F0F0;box-sizing:border-box;border:1px solid;border-color:#F0F0F0 #000 #000 #F0F0F0;box-shadow:inset 1px 1px 0 #fff,inset -1px -1px 0 #A0A0A0;"></div>
<svg class="a" style="left:341px;top:727px" width="5" height="9"><path d="M5 0V9L0 4.5Z" fill="#000"/></svg>
<div class="a " style="left:355px;top:721px;width:98px;height:21px;background:#F0F0F0;box-sizing:border-box;border:1px solid;border-color:#F0F0F0 #000 #000 #F0F0F0;box-shadow:inset 1px 1px 0 #fff,inset -1px -1px 0 #A0A0A0;"></div>
<div class="a " style="left:1432px;top:721px;width:20px;height:21px;background:#F0F0F0;box-sizing:border-box;border:1px solid;border-color:#F0F0F0 #000 #000 #F0F0F0;box-shadow:inset 1px 1px 0 #fff,inset -1px -1px 0 #A0A0A0;"></div>
<svg class="a" style="left:1440px;top:727px" width="5" height="9"><path d="M0 0V9L5 4.5Z" fill="#000"/></svg>
<div class="a " style="left:1452px;top:721px;width:20px;height:21px;background:#fff;box-sizing:border-box;border-left:1px solid #808080;border-top:1px solid #808080;"></div>
<div class="a " style="left:327px;top:741px;width:1147px;height:2px;background:#000;"></div>
</body></html>
